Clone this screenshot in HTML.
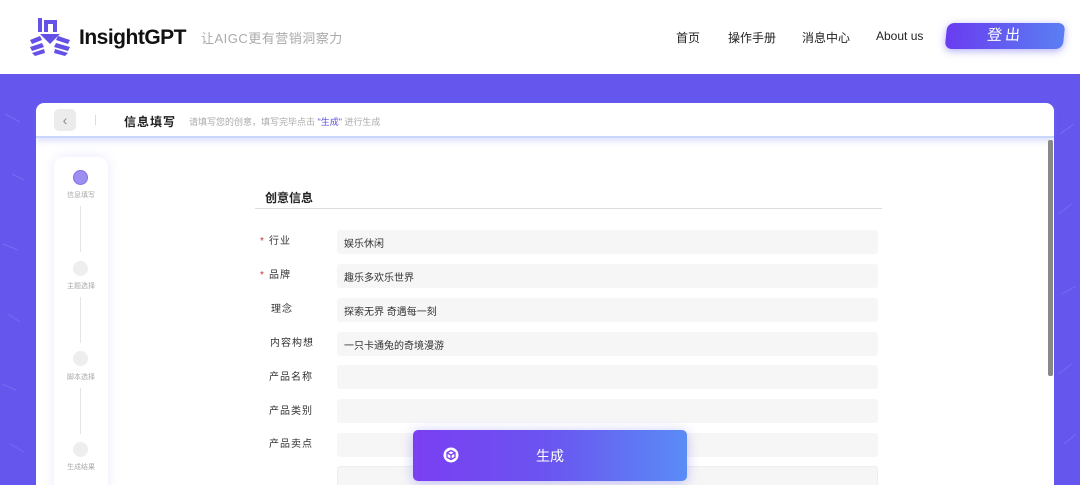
<!DOCTYPE html>
<html><head><meta charset="utf-8"><style>
*{margin:0;padding:0;box-sizing:border-box}
html,body{width:1080px;height:485px;overflow:hidden}
body{font-family:"Liberation Sans","Noto Sans CJK SC",sans-serif;background:#fff;position:relative}
.top{position:absolute;left:0;top:0;width:1080px;height:74px;background:#fff}
.bg{position:absolute;left:0;top:74px;width:1080px;height:411px;background:#6557ee;overflow:hidden}
.nav{position:absolute;top:29px;font-size:12px;color:#222}
.logout{position:absolute;left:946px;top:23px;width:118px;height:26px;border-radius:7px;background:linear-gradient(90deg,#6a3cf0,#5a7ff2);box-shadow:0 2px 8px rgba(100,90,240,.5);color:#fff;font-size:15px;text-align:center;line-height:26px;letter-spacing:3px;transform:skewX(-6deg)}
.card{position:absolute;left:36px;top:103px;width:1018px;height:382px;background:#fff;border-radius:8px 8px 0 0}
.hdr{position:absolute;left:0;top:0;width:1018px;height:35px;border-bottom:2px solid #c9d7ff;box-shadow:0 3px 6px rgba(120,130,240,.25)}
.back{position:absolute;left:18px;top:6px;width:22px;height:22px;border-radius:5px;background:#ececec;color:#888;font-size:14px;text-align:center;line-height:22px}
.side{position:absolute;left:54px;top:157px;width:54px;height:340px;background:#fff;border-radius:10px;box-shadow:0 0 12px rgba(140,150,240,.2)}
.dot{position:absolute;left:73px;width:15px;height:15px;border-radius:50%;background:#eee}
.sl{position:absolute;left:58px;width:46px;text-align:center;font-size:7px;color:#aaa}
.vl{position:absolute;left:80px;width:1px;height:46px;background:#e5e5e5}
.lab{position:absolute;left:269px;font-size:10px;color:#333;letter-spacing:1px;line-height:12px}
.req{position:absolute;left:260px;font-size:10px;color:#c33;line-height:12px}
.inp{position:absolute;left:337px;width:541px;height:24px;background:#f6f6f6;border-radius:3px;font-size:10px;color:#333;padding-left:7px;display:flex;align-items:center}
</style></head><body>
<div class="top">
<svg style="position:absolute;left:28px;top:18px" width="44" height="38" viewBox="0 0 44 38">
<g fill="#6452e6">
<rect x="10" y="0" width="4" height="14"/><rect x="16" y="2" width="4" height="12"/><rect x="20" y="2" width="9" height="4"/><rect x="25" y="2" width="4" height="12"/>
<polygon points="12,16 32,16 22,26"/>
<polygon points="2,22 12,18 14,22 4,26"/><polygon points="2,29 14,25 16,29 4,33"/><polygon points="4,35 16,31 17,35 7,38"/>
<polygon points="30,18 42,22 40,26 28,22"/><polygon points="28,25 42,29 40,33 26,29"/><polygon points="27,31 40,35 37,38 26,35"/>
</g></svg>
<div style="position:absolute;left:79px;top:26px;font-size:21px;font-weight:bold;color:#111;letter-spacing:-0.5px">InsightGPT</div>
<div style="position:absolute;left:201px;top:28px;font-size:13px;color:#aaa;letter-spacing:0.5px">让AIGC更有营销洞察力</div>
<div class="nav" style="left:676px">首页</div>
<div class="nav" style="left:728px">操作手册</div>
<div class="nav" style="left:802px">消息中心</div>
<div class="nav" style="left:876px">About us</div>
<div class="logout">登出</div>
</div>
<div class="bg">
<svg width="1080" height="411" style="position:absolute;left:0;top:0;opacity:.2">
<g stroke="#b8c0ff" stroke-width="1">
<line x1="5" y1="40" x2="20" y2="48"/><line x1="12" y1="100" x2="24" y2="106"/><line x1="3" y1="170" x2="18" y2="176"/><line x1="8" y1="240" x2="20" y2="248"/><line x1="2" y1="310" x2="16" y2="316"/><line x1="10" y1="370" x2="24" y2="378"/>
<line x1="1060" y1="60" x2="1074" y2="50"/><line x1="1058" y1="140" x2="1072" y2="130"/><line x1="1062" y1="220" x2="1076" y2="212"/><line x1="1058" y1="300" x2="1072" y2="290"/><line x1="1064" y1="370" x2="1076" y2="360"/>
</g></svg>
</div>
<div class="card">
<div class="hdr">
<div class="back">‹</div>
<div style="position:absolute;left:59px;top:12px;width:1px;height:10px;background:#ddd"></div>
<div style="position:absolute;left:88px;top:10px;font-size:12px;font-weight:bold;color:#222;letter-spacing:1px">信息填写</div>
<div style="position:absolute;left:153px;top:12px;font-size:9px;color:#aaa">请填写您的创意，填写完毕点击 <span style="color:#5a4ee0">"生成"</span> 进行生成</div>
</div>
<div style="position:absolute;left:1012px;top:37px;width:5px;height:236px;background:#888;border-radius:2px"></div>
</div>
<div class="side"></div>
<div class="dot" style="top:170px;background:#9d8ff2;border:1px solid #7f70e8"></div>
<div class="sl" style="top:190px">信息填写</div>
<div class="vl" style="top:206px"></div>
<div class="dot" style="top:261px"></div>
<div class="sl" style="top:281px">主题选择</div>
<div class="vl" style="top:297px"></div>
<div class="dot" style="top:351px"></div>
<div class="sl" style="top:372px">脚本选择</div>
<div class="vl" style="top:388px"></div>
<div class="dot" style="top:442px"></div>
<div class="sl" style="top:462px">生成结果</div>

<div style="position:absolute;left:265px;top:189px;font-size:12px;font-weight:bold;color:#222">创意信息</div>
<div style="position:absolute;left:255px;top:208px;width:627px;height:1px;background:#ddd"></div>

<div class="req" style="top:236px">*</div><div class="lab" style="top:236px">行业</div><div class="inp" style="top:230px">娱乐休闲</div>
<div class="req" style="top:270px">*</div><div class="lab" style="top:270px">品牌</div><div class="inp" style="top:264px">趣乐多欢乐世界</div>
<div class="lab" style="top:304px;left:271px">理念</div><div class="inp" style="top:298px">探索无界 奇遇每一刻</div>
<div class="lab" style="top:338px;left:270px">内容构想</div><div class="inp" style="top:332px">一只卡通兔的奇境漫游</div>
<div class="lab" style="top:372px">产品名称</div><div class="inp" style="top:365px"></div>
<div class="lab" style="top:406px">产品类别</div><div class="inp" style="top:399px"></div>
<div class="lab" style="top:439px">产品卖点</div><div class="inp" style="top:433px"></div>
<div class="inp" style="top:466px;height:24px;border:1px solid #eee"></div>

<div style="position:absolute;left:413px;top:430px;width:274px;height:51px;border-radius:5px;background:linear-gradient(90deg,#7a3ff2,#6a55f0 50%,#5a8cf6);box-shadow:0 2px 12px rgba(110,100,240,.4)">
<svg style="position:absolute;left:30px;top:17px" width="16" height="16" viewBox="0 0 16 16"><circle cx="8" cy="8" r="7.5" fill="#fff"/><path d="M8 3.5 L12 5.7 L12 10.3 L8 12.5 L4 10.3 L4 5.7 Z M4 5.7 L8 8 L12 5.7 M8 8 L8 12.5" fill="none" stroke="#7a3ff2" stroke-width="1.3" stroke-linejoin="round"/></svg>
<div style="position:absolute;left:0;width:274px;top:16px;text-align:center;font-size:14px;color:#fff">生成</div>
</div>
</body></html>
